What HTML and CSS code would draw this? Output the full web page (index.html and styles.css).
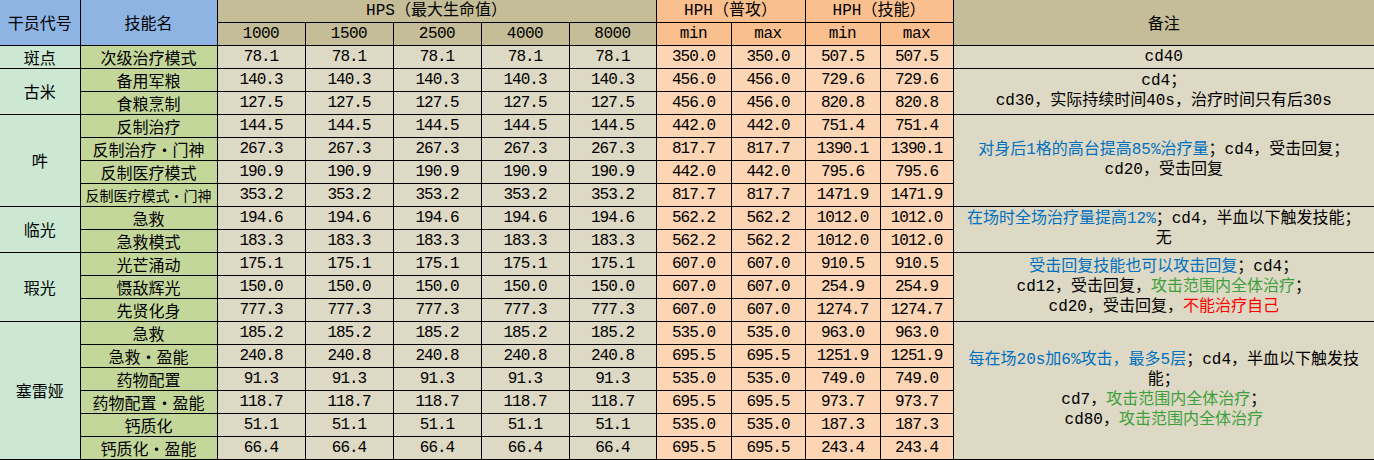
FILE: index.html
```html
<!DOCTYPE html>
<html lang="zh-CN">
<head>
<meta charset="utf-8">
<title>医疗干员数据</title>
<link rel="stylesheet" href="styles.css">
</head>
<body>
<table class="sheet">
  <colgroup>
    <col class="w-op"><col class="w-sk">
    <col class="w-hp"><col class="w-hp"><col class="w-hp"><col class="w-hp"><col class="w-hp8">
    <col class="w-ph1"><col class="w-ph2"><col class="w-ph1"><col class="w-ph3">
    <col class="w-nt">
  </colgroup>
  <thead>
    <tr class="hr1">
      <th rowspan="2" class="hb op-h">干员代号</th>
      <th rowspan="2" class="hb sk-h">技能名</th>
      <th colspan="5" class="hk grp hps-g">HPS（最大生命值）</th>
      <th colspan="2" class="ho grp atk-g">HPH（普攻）</th>
      <th colspan="2" class="ho grp skl-g">HPH（技能）</th>
      <th rowspan="2" class="hk nt-h">备注</th>
    </tr>
    <tr class="hr2">
      <th class="hk sub">1000</th>
      <th class="hk sub">1500</th>
      <th class="hk sub">2500</th>
      <th class="hk sub">4000</th>
      <th class="hk sub e3">8000</th>
      <th class="ho sub">min</th>
      <th class="ho sub e2">max</th>
      <th class="ho sub">min</th>
      <th class="ho sub e3">max</th>
    </tr>
  </thead>
  <tbody>
    <tr>
      <td class="op">斑点</td><td class="sk">次级治疗模式</td>
      <td class="hp">78.1</td><td class="hp">78.1</td><td class="hp">78.1</td><td class="hp">78.1</td><td class="hp e3">78.1</td>
      <td class="ph">350.0</td><td class="ph e2">350.0</td><td class="ph">507.5</td><td class="ph e3">507.5</td>
      <td class="nt">cd40</td>
    </tr>
    <tr>
      <td class="op" rowspan="2">古米</td><td class="sk">备用军粮</td>
      <td class="hp">140.3</td><td class="hp">140.3</td><td class="hp">140.3</td><td class="hp">140.3</td><td class="hp e3">140.3</td>
      <td class="ph">456.0</td><td class="ph e2">456.0</td><td class="ph">729.6</td><td class="ph e3">729.6</td>
      <td class="nt" rowspan="2">cd4；<br>cd30，实际持续时间40s，治疗时间只有后30s</td>
    </tr>
    <tr>
      <td class="sk">食粮烹制</td>
      <td class="hp">127.5</td><td class="hp">127.5</td><td class="hp">127.5</td><td class="hp">127.5</td><td class="hp e3">127.5</td>
      <td class="ph">456.0</td><td class="ph e2">456.0</td><td class="ph">820.8</td><td class="ph e3">820.8</td>
    </tr>
    <tr>
      <td class="op" rowspan="4">吽</td><td class="sk">反制治疗</td>
      <td class="hp">144.5</td><td class="hp">144.5</td><td class="hp">144.5</td><td class="hp">144.5</td><td class="hp e3">144.5</td>
      <td class="ph">442.0</td><td class="ph e2">442.0</td><td class="ph">751.4</td><td class="ph e3">751.4</td>
      <td class="nt" rowspan="4"><span class="b">对身后1格的高台提高85%治疗量</span>；cd4，受击回复；<br>cd20，受击回复</td>
    </tr>
    <tr>
      <td class="sk">反制治疗·门神</td>
      <td class="hp">267.3</td><td class="hp">267.3</td><td class="hp">267.3</td><td class="hp">267.3</td><td class="hp e3">267.3</td>
      <td class="ph">817.7</td><td class="ph e2">817.7</td><td class="ph">1390.1</td><td class="ph e3">1390.1</td>
    </tr>
    <tr>
      <td class="sk">反制医疗模式</td>
      <td class="hp">190.9</td><td class="hp">190.9</td><td class="hp">190.9</td><td class="hp">190.9</td><td class="hp e3">190.9</td>
      <td class="ph">442.0</td><td class="ph e2">442.0</td><td class="ph">795.6</td><td class="ph e3">795.6</td>
    </tr>
    <tr>
      <td class="sk small">反制医疗模式·门神</td>
      <td class="hp">353.2</td><td class="hp">353.2</td><td class="hp">353.2</td><td class="hp">353.2</td><td class="hp e3">353.2</td>
      <td class="ph">817.7</td><td class="ph e2">817.7</td><td class="ph">1471.9</td><td class="ph e3">1471.9</td>
    </tr>
    <tr>
      <td class="op" rowspan="2">临光</td><td class="sk">急救</td>
      <td class="hp">194.6</td><td class="hp">194.6</td><td class="hp">194.6</td><td class="hp">194.6</td><td class="hp e3">194.6</td>
      <td class="ph">562.2</td><td class="ph e2">562.2</td><td class="ph">1012.0</td><td class="ph e3">1012.0</td>
      <td class="nt" rowspan="2"><span class="b">在场时全场治疗量提高12%</span>；cd4，半血以下触发技能；<br>无</td>
    </tr>
    <tr>
      <td class="sk">急救模式</td>
      <td class="hp">183.3</td><td class="hp">183.3</td><td class="hp">183.3</td><td class="hp">183.3</td><td class="hp e3">183.3</td>
      <td class="ph">562.2</td><td class="ph e2">562.2</td><td class="ph">1012.0</td><td class="ph e3">1012.0</td>
    </tr>
    <tr>
      <td class="op" rowspan="3">瑕光</td><td class="sk">光芒涌动</td>
      <td class="hp">175.1</td><td class="hp">175.1</td><td class="hp">175.1</td><td class="hp">175.1</td><td class="hp e3">175.1</td>
      <td class="ph">607.0</td><td class="ph e2">607.0</td><td class="ph">910.5</td><td class="ph e3">910.5</td>
      <td class="nt" rowspan="3"><span class="b">受击回复技能也可以攻击回复</span>；cd4；<br>cd12，受击回复，<span class="g">攻击范围内全体治疗</span>；<br>cd20，受击回复，<span class="r">不能治疗自己</span></td>
    </tr>
    <tr>
      <td class="sk">慑敌辉光</td>
      <td class="hp">150.0</td><td class="hp">150.0</td><td class="hp">150.0</td><td class="hp">150.0</td><td class="hp e3">150.0</td>
      <td class="ph">607.0</td><td class="ph e2">607.0</td><td class="ph">254.9</td><td class="ph e3">254.9</td>
    </tr>
    <tr>
      <td class="sk">先贤化身</td>
      <td class="hp">777.3</td><td class="hp">777.3</td><td class="hp">777.3</td><td class="hp">777.3</td><td class="hp e3">777.3</td>
      <td class="ph">607.0</td><td class="ph e2">607.0</td><td class="ph">1274.7</td><td class="ph e3">1274.7</td>
    </tr>
    <tr>
      <td class="op" rowspan="6">塞雷娅</td><td class="sk">急救</td>
      <td class="hp">185.2</td><td class="hp">185.2</td><td class="hp">185.2</td><td class="hp">185.2</td><td class="hp e3">185.2</td>
      <td class="ph">535.0</td><td class="ph e2">535.0</td><td class="ph">963.0</td><td class="ph e3">963.0</td>
      <td class="nt" rowspan="6"><span class="b">每在场20s加6%攻击，最多5层</span>；cd4，半血以下触发技<br>能；<br>cd7，<span class="g">攻击范围内全体治疗</span>；<br>cd80，<span class="g">攻击范围内全体治疗</span></td>
    </tr>
    <tr>
      <td class="sk">急救·盈能</td>
      <td class="hp">240.8</td><td class="hp">240.8</td><td class="hp">240.8</td><td class="hp">240.8</td><td class="hp e3">240.8</td>
      <td class="ph">695.5</td><td class="ph e2">695.5</td><td class="ph">1251.9</td><td class="ph e3">1251.9</td>
    </tr>
    <tr>
      <td class="sk">药物配置</td>
      <td class="hp">91.3</td><td class="hp">91.3</td><td class="hp">91.3</td><td class="hp">91.3</td><td class="hp e3">91.3</td>
      <td class="ph">535.0</td><td class="ph e2">535.0</td><td class="ph">749.0</td><td class="ph e3">749.0</td>
    </tr>
    <tr>
      <td class="sk">药物配置·盈能</td>
      <td class="hp">118.7</td><td class="hp">118.7</td><td class="hp">118.7</td><td class="hp">118.7</td><td class="hp e3">118.7</td>
      <td class="ph">695.5</td><td class="ph e2">695.5</td><td class="ph">973.7</td><td class="ph e3">973.7</td>
    </tr>
    <tr>
      <td class="sk">钙质化</td>
      <td class="hp">51.1</td><td class="hp">51.1</td><td class="hp">51.1</td><td class="hp">51.1</td><td class="hp e3">51.1</td>
      <td class="ph">535.0</td><td class="ph e2">535.0</td><td class="ph">187.3</td><td class="ph e3">187.3</td>
    </tr>
    <tr>
      <td class="sk">钙质化·盈能</td>
      <td class="hp">66.4</td><td class="hp">66.4</td><td class="hp">66.4</td><td class="hp">66.4</td><td class="hp e3">66.4</td>
      <td class="ph">695.5</td><td class="ph e2">695.5</td><td class="ph">243.4</td><td class="ph e3">243.4</td>
    </tr>
  </tbody>
</table>
</body>
</html>
```
FILE: styles.css
```css
html, body {
  margin: 0;
  padding: 0;
  background: #ffffff;
}

.sheet {
  border-collapse: collapse;
  table-layout: fixed;
  width: 1374px;
  font-family: "Liberation Mono", "Noto Sans CJK SC", monospace;
  font-size: 16px;
  color: #000000;
}

.w-op { width: 80px; }
.w-sk { width: 137px; }
.w-hp { width: 88px; }
.w-hp8 { width: 87px; }
.w-ph1 { width: 75px; }
.w-ph2 { width: 74px; }
.w-ph3 { width: 73px; }
.w-nt { width: 421px; }

.sheet th,
.sheet td {
  padding: 0;
  font-weight: normal;
  line-height: 20px;
  text-align: center;
  vertical-align: middle;
  white-space: nowrap;
  overflow: hidden;
  border: 1px solid #000000;
}

.sheet tr > :first-child { border-left: 0; }
.sheet tr > :last-child { border-right: 0; }
.hr1 > th { border-top: 0; }

.hr1 { height: 22px; }
.hr2 { height: 23px; }
.sheet tbody tr { height: 23px; }

/* header colours */
.hb { background: #8db4e2; }
.hk { background: #c4bd97; }
.ho { background: #fabf8f; }

.op-h, .sk-h, .nt-h, .sub {
  border-bottom: 2px solid #2e2e2e;
}
.op-h, .sk-h {
  font-family: "Noto Sans CJK SC", sans-serif;
}
.sk-h { border-right: 2px solid #2e2e2e; }
.nt-h {
  font-family: "Noto Sans CJK SC", sans-serif;
  font-weight: bold;
}
.hps-g { border-right: 3px solid #000000; }
.atk-g { border-right: 2px solid #000000; }
.skl-g { border-right: 3px solid #000000; }
.sub { letter-spacing: -0.5px; }

/* data columns */
.op {
  background: #cce8d3;
  font-family: "Noto Sans CJK SC", sans-serif;
}
.sk {
  background: #c4d79b;
  font-family: "Noto Sans CJK SC", sans-serif;
  border-right: 2px solid #2e2e2e;
}
.sk.small { font-size: 14px; }

.hp {
  background: #ddd9c4;
  border-right-style: dashed;
  letter-spacing: -1px;
}
.ph {
  background: #fcd5b4;
  border-right-style: dashed;
  letter-spacing: -1px;
}
.e2 { border-right: 2px solid #000000; }
.e3 { border-right: 3px solid #000000; }
.hp.e3, .ph.e3 { border-right-style: solid; }
.ph.e2 { border-right-style: solid; }

.nt {
  background: #ddd9c4;
  line-height: 23px;
}

.b { color: #0070c0; }
.g { color: #3f9f3f; }
.r { color: #ff0000; }
```
